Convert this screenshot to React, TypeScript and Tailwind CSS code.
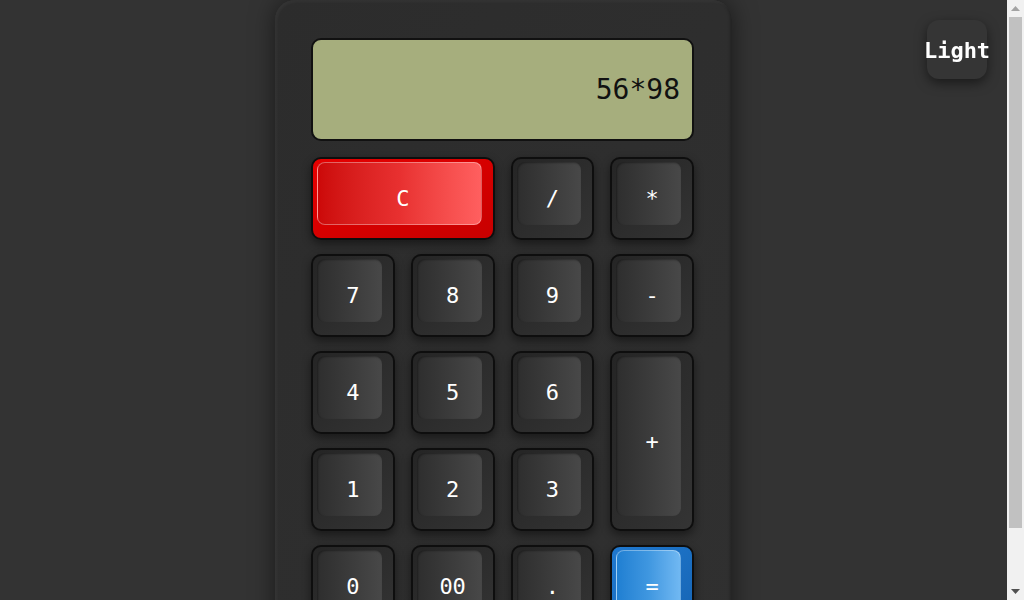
import React from "react";

type Tone = "dark" | "red" | "blue";

type KeyDef = {
  label: string;
  tone?: Tone;
  span?: string;
};

const keys: KeyDef[] = [
  { label: "C", tone: "red", span: "col-span-2" },
  { label: "/" },
  { label: "*" },
  { label: "7" },
  { label: "8" },
  { label: "9" },
  { label: "-" },
  { label: "4" },
  { label: "5" },
  { label: "6" },
  { label: "+", span: "row-span-2" },
  { label: "1" },
  { label: "2" },
  { label: "3" },
  { label: "0" },
  { label: "00" },
  { label: "." },
  { label: "=", tone: "blue" },
];

const outerTone: Record<Tone, string> = {
  dark: "bg-gradient-to-br from-[#252525] via-[#2c2c2c] to-[#343434]",
  red: "bg-gradient-to-br from-[#e60000] via-[#d60000] to-[#c80000]",
  blue: "bg-gradient-to-br from-[#1f78cf] via-[#1b6fc2] to-[#1764b3]",
};

const capTone: Record<Tone, string> = {
  dark: "bg-gradient-to-r from-[#2e2e2e] to-[#484848] shadow-[inset_1px_1px_2px_rgba(0,0,0,0.35)]",
  red: "bg-gradient-to-r from-[#cc0808] via-[#e83030] to-[#ff5f5f] border border-[rgba(255,255,255,0.35)]",
  blue: "bg-gradient-to-r from-[#1f7fd2] via-[#3f97e0] to-[#70b8f2] border border-[rgba(255,255,255,0.35)]",
};

function Key({ label, tone = "dark", span = "" }: KeyDef) {
  return (
    <button
      className={`relative rounded-[10px] border-2 border-[#0e0e0e] shadow-[0_4px_10px_rgba(0,0,0,0.45)] ${outerTone[tone]} ${span}`}
    >
      <span
        className={`absolute left-[4px] top-[3px] right-[11px] bottom-[13px] rounded-[8px] ${capTone[tone]}`}
      />
      <span className="absolute inset-0 flex items-center justify-center text-[22px] text-white">
        {label}
      </span>
    </button>
  );
}

// Classic page scrollbar along the right edge of the window.
function ScrollTrack() {
  return (
    <div className="fixed right-0 top-0 flex h-screen w-[17px] flex-col bg-[#f1f1f1]">
      <div className="flex h-[17px] items-center justify-center">
        <svg width="9" height="5" viewBox="0 0 9 5">
          <path d="M0 5 L4.5 0 L9 5 Z" fill="#a3a3a3" />
        </svg>
      </div>
      <div className="mx-[2px] h-[511px] bg-[#c1c1c1]" />
      <div className="flex-1" />
      <div className="flex h-[17px] items-center justify-center">
        <svg width="9" height="5" viewBox="0 0 9 5">
          <path d="M0 0 L9 0 L4.5 5 Z" fill="#505050" />
        </svg>
      </div>
    </div>
  );
}

export default function App() {
  return (
    <div
      className="min-h-screen bg-[#333333] pr-[17px]"
      style={{ fontFamily: '"DejaVu Sans Mono", monospace' }}
    >
      <div className="mx-auto w-[457px] rounded-[20px] bg-gradient-to-br from-[#2c2c2c] to-[#303030] pl-[36px] pr-[37px] pt-[38px] pb-[38px] shadow-[0_0_24px_rgba(0,0,0,0.5),inset_2px_2px_3px_rgba(255,255,255,0.04),inset_-2px_-2px_3px_rgba(0,0,0,0.25)]">
        <div className="flex h-[103px] w-[383px] items-center justify-end rounded-[10px] border-2 border-[#111111] bg-[#a6ae7d] pr-[12px] text-[28px] text-[#111111]">
          56*98
        </div>
        <div className="mt-4 grid w-[383px] grid-cols-4 auto-rows-[83px] gap-x-4 gap-y-[14px]">
          {keys.map((k) => (
            <Key key={k.label} {...k} />
          ))}
        </div>
      </div>
      <button className="fixed right-[37px] top-5 flex h-[59px] w-[60px] items-center justify-center rounded-[12px] bg-[#353535] pt-[2px] text-[22px] font-bold text-white shadow-[0_4px_12px_rgba(0,0,0,0.5)]">
        Light
      </button>
      <ScrollTrack />
    </div>
  );
}
